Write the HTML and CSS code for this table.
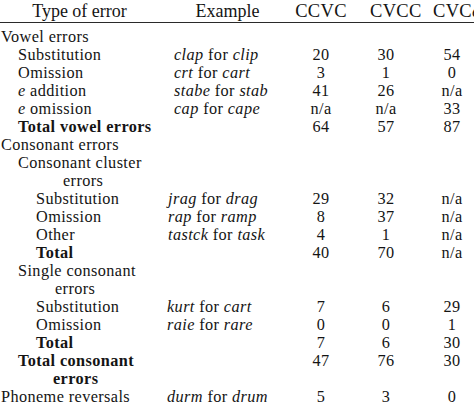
FILE: index.html
```html
<!DOCTYPE html>
<html>
<head>
<meta charset="utf-8">
<link rel="stylesheet" href="styles.css">
</head>
<body>
<div class="sheet serif">
  <div class="row head">
    <div class="h-label serif">Type of error</div>
    <div class="h-ex serif">Example</div>
    <div class="h-num h1 serif">CCVC</div>
    <div class="h-num h2 serif">CVCC</div>
    <div class="h-num h3 serif">CVC<i>e</i></div>
  </div>

  <div class="row first">
    <div class="l0 serif">Vowel errors</div><div></div><div></div><div></div><div></div>
  </div>
  <div class="row v">
    <div class="l1 serif">Substitution</div><div class="ex serif"><i>clap</i> for <i>clip</i></div><div class="n serif">20</div><div class="n serif">30</div><div class="n serif">54</div>
  </div>
  <div class="row v">
    <div class="l1 serif">Omission</div><div class="ex serif"><i>crt</i> for <i>cart</i></div><div class="n serif">3</div><div class="n serif">1</div><div class="n serif">0</div>
  </div>
  <div class="row v">
    <div class="l1 serif"><i>e</i> addition</div><div class="ex serif"><i>stabe</i> for <i>stab</i></div><div class="n serif">41</div><div class="n serif">26</div><div class="n serif">n/a</div>
  </div>
  <div class="row v">
    <div class="l1 serif"><i>e</i> omission</div><div class="ex serif"><i>cap</i> for <i>cape</i></div><div class="n serif">n/a</div><div class="n serif">n/a</div><div class="n serif">33</div>
  </div>
  <div class="row">
    <div class="l1 b serif">Total vowel errors</div><div></div><div class="n serif">64</div><div class="n serif">57</div><div class="n serif">87</div>
  </div>
  <div class="row">
    <div class="l0 serif">Consonant errors</div><div></div><div></div><div></div><div></div>
  </div>
  <div class="row">
    <div class="l1 serif">Consonant cluster<span class="cont c63">errors</span></div><div></div><div></div><div></div><div></div>
  </div>
  <div class="row c">
    <div class="l2 serif">Substitution</div><div class="ex serif"><i>jrag</i> for <i>drag</i></div><div class="n serif">29</div><div class="n serif">32</div><div class="n serif">n/a</div>
  </div>
  <div class="row c">
    <div class="l2 serif">Omission</div><div class="ex serif"><i>rap</i> for <i>ramp</i></div><div class="n serif">8</div><div class="n serif">37</div><div class="n serif">n/a</div>
  </div>
  <div class="row c">
    <div class="l2 serif">Other</div><div class="ex serif"><i>tastck</i> for <i>task</i></div><div class="n serif">4</div><div class="n serif">1</div><div class="n serif">n/a</div>
  </div>
  <div class="row">
    <div class="l2 b serif">Total</div><div></div><div class="n serif">40</div><div class="n serif">70</div><div class="n serif">n/a</div>
  </div>
  <div class="row">
    <div class="l1 serif">Single consonant<span class="cont c55">errors</span></div><div></div><div></div><div></div><div></div>
  </div>
  <div class="row">
    <div class="l2 serif">Substitution</div><div class="ex serif"><i>kurt</i> for <i>cart</i></div><div class="n serif">7</div><div class="n serif">6</div><div class="n serif">29</div>
  </div>
  <div class="row">
    <div class="l2 serif">Omission</div><div class="ex serif"><i>raie</i> for <i>rare</i></div><div class="n serif">0</div><div class="n serif">0</div><div class="n serif">1</div>
  </div>
  <div class="row">
    <div class="l2 b serif">Total</div><div></div><div class="n serif">7</div><div class="n serif">6</div><div class="n serif">30</div>
  </div>
  <div class="row">
    <div class="l1 b serif">Total consonant<span class="cont c53">errors</span></div><div></div><div class="n serif">47</div><div class="n serif">76</div><div class="n serif">30</div>
  </div>
  <div class="row">
    <div class="l0 serif">Phoneme reversals</div><div class="ex serif"><i>durm</i> for <i>drum</i></div><div class="n serif">5</div><div class="n serif">3</div><div class="n serif">0</div>
  </div>
</div>
</body>
</html>
```
FILE: styles.css
```css
body { margin: 0; }

.serif { font-family: "Liberation Serif"; }

.sheet {
  width: 474px;
  overflow: hidden;
  color: #141414;
  font-size: 16.25px;
  letter-spacing: 0.4px;
  line-height: 18px;
}

.row {
  display: grid;
  grid-template-columns: 167px 121px 66px 64px 68px;
  width: 486px;
  white-space: nowrap;
}

.head {
  font-size: 18px;
  letter-spacing: 0;
  padding: 1.5px 0 2.5px 0;
  border-bottom: 1px solid #2a2a2a;
}

.h-label { text-align: center; padding-right: 8px; }
.h-ex { text-align: center; }
.h-num {
  font-size: 18.5px;
  letter-spacing: 0.3px;
  text-align: left;
}
.h1 { text-align: center; }
.h2 { padding-left: 16px; }
.h3 { padding-left: 15px; }

.first { margin-top: 5px; }

.l0 { padding-left: 1px; }
.l1 { padding-left: 18px; }
.l2 { padding-left: 36px; }
.b { font-weight: bold; }

.cont { display: block; }
.c63 { padding-left: 45px; }
.c55 { padding-left: 37px; }
.c53 { padding-left: 35px; }

.ex { padding-left: 0; }
.v .ex { padding-left: 7px; }
.c .ex { padding-left: 1px; }

.n { text-align: center; }
```
